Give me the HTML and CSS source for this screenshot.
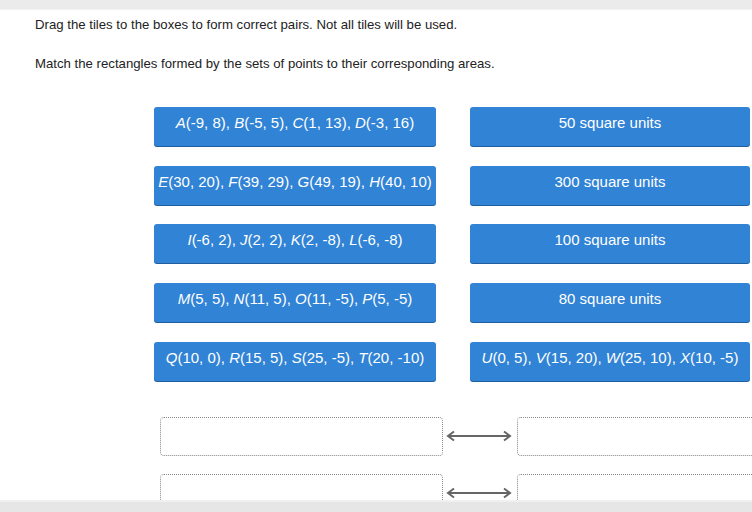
FILE: index.html
```html
<!DOCTYPE html>
<html lang="en">
<head>
	<meta charset="UTF-8">
	<title>Drag the tiles</title>
	<link rel="stylesheet" href="styles.css">
</head>
<body>
	<div class="topbar"></div>
	<div class="page">
		<p class="prompt">Drag the tiles to the boxes to form correct pairs. Not all tiles will be used.</p>
		<p class="prompt second">Match the rectangles formed by the sets of points to their corresponding areas.</p>

		<div class="tiles">
			<div class="tile"><i>A</i>(-9, 8), <i>B</i>(-5, 5), <i>C</i>(1, 13), <i>D</i>(-3, 16)</div>
			<div class="tile">50 square units</div>
			<div class="tile"><i>E</i>(30, 20), <i>F</i>(39, 29), <i>G</i>(49, 19), <i>H</i>(40, 10)</div>
			<div class="tile">300 square units</div>
			<div class="tile"><i>I</i>(-6, 2), <i>J</i>(2, 2), <i>K</i>(2, -8), <i>L</i>(-6, -8)</div>
			<div class="tile">100 square units</div>
			<div class="tile"><i>M</i>(5, 5), <i>N</i>(11, 5), <i>O</i>(11, -5), <i>P</i>(5, -5)</div>
			<div class="tile">80 square units</div>
			<div class="tile"><i>Q</i>(10, 0), <i>R</i>(15, 5), <i>S</i>(25, -5), <i>T</i>(20, -10)</div>
			<div class="tile"><i>U</i>(0, 5), <i>V</i>(15, 20), <i>W</i>(25, 10), <i>X</i>(10, -5)</div>
		</div>

		<div class="pairs">
			<div class="pair">
				<div class="drop"></div>
				<svg class="arrow" width="70" height="16" viewBox="0 0 70 16">
					<path d="M4 8 H66 M10 3.5 L4 8 L10 12.5 M60 3.5 L66 8 L60 12.5" fill="none" stroke="#666" stroke-width="2"/>
				</svg>
				<div class="drop"></div>
			</div>
			<div class="pair">
				<div class="drop"></div>
				<svg class="arrow" width="70" height="16" viewBox="0 0 70 16">
					<path d="M4 8 H66 M10 3.5 L4 8 L10 12.5 M60 3.5 L66 8 L60 12.5" fill="none" stroke="#666" stroke-width="2"/>
				</svg>
				<div class="drop"></div>
			</div>
		</div>
	</div>
	<div class="bottombar"></div>
</body>
</html>
```

FILE: styles.css
```css
*{margin: 0;padding: 0;box-sizing: border-box;}
html,body{
	height: 100%;
	overflow: hidden;
}
body{
	font-family: "Liberation Sans", Arial, sans-serif;
	background: #fff;
	color: #222;
}
.topbar{
	height: 10px;
	background: #ebebeb;
	border-bottom: 1px solid #f2f2f2;
}
.page{
	padding: 7px 0 0 35px;
	overflow: hidden;
}
.prompt{
	font-size: 13.2px;
	line-height: 15px;
	white-space: nowrap;
}
.prompt.second{
	margin-top: 24px;
}

/*tiles*/
.tiles{
	display: grid;
	grid-template-columns: 282px 280px;
	column-gap: 34px;
	row-gap: 19.7px;
	margin: 36px 0 0 119px;
}
.tile{
	height: 39px;
	background: #3183d5;
	border-radius: 3px;
	box-shadow: 0 1px 0 #1f5f9f;
	color: #fff;
	font-size: 15px;
	line-height: 16px;
	padding-top: 8px;
	text-align: center;
	white-space: nowrap;
}

/*drop zones*/
.pairs{
	margin: 36px 0 0 125px;
	display: flex;
	flex-direction: column;
	gap: 18px;
}
.pair{
	display: flex;
	align-items: center;
}
.drop{
	flex: none;
	width: 283px;
	height: 39px;
	border: 1px dotted #888;
	border-radius: 4px;
	background: #fff;
}
.drop + .arrow + .drop{
	width: 240px;
}
.arrow{
	flex: none;
	margin: 0 3px 0 1px;
}
.bottombar{
	position: fixed;
	left: 0;
	right: 0;
	bottom: 0;
	height: 12px;
	background: #e6e6e6;
	border-top: 2px solid #f0f0f0;
}
```
